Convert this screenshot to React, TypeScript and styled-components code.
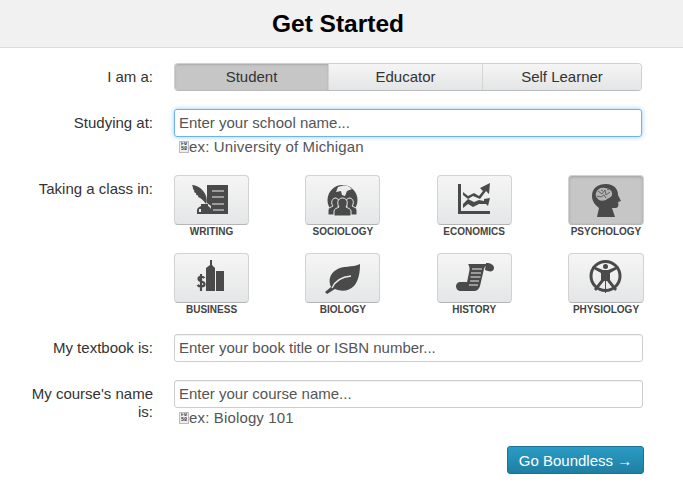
import React from 'react';
import styled, { createGlobalStyle } from 'styled-components';

const GlobalStyle = createGlobalStyle`
  html, body {
    margin: 0;
    padding: 0;
    background: #fff;
    font-family: "Liberation Sans", Arial, sans-serif;
  }
`;

const Page = styled.div`
  width: 683px;
  height: 492px;
  overflow: hidden;
  background: #fff;
`;

const Header = styled.h1`
  height: 47px;
  margin: 0 0 15px 0;
  padding-right: 7px;
  background: #f1f1f1;
  border-bottom: 1px solid #dcdcdc;
  color: #000;
  font-size: 24.5px;
  line-height: 47px;
  font-weight: bold;
  text-align: center;
`;

const Row = styled.div<{ $gap: number }>`
  display: grid;
  grid-template-columns: 123px 470px;
  column-gap: 21px;
  padding-left: 30px;
  margin-bottom: ${props => props.$gap}px;
`;

const Label = styled.div`
  color: #333;
  font-size: 15px;
  line-height: 18px;
  padding-top: 5px;
  text-align: right;
`;

const Segments = styled.div`
  display: grid;
  grid-template-columns: 153px 154px 1fr;
  width: 468px;
  height: 28px;
  box-sizing: border-box;
  border: 1px solid #cfcfcf;
  border-bottom-color: #bbb;
  border-radius: 4px;
  overflow: hidden;
`;

const Segment = styled.div<{ $active?: boolean }>`
  color: #333;
  font-size: 15px;
  line-height: 26px;
  text-align: center;
  border-left: 1px solid #d4d4d4;
  background: ${props => props.$active ? '#c6c6c6' : 'linear-gradient(#f5f5f5, #e4e5e6)'};
  box-shadow: ${props => props.$active ? 'inset 0 1px 2px rgba(0, 0, 0, 0.15)' : 'none'};

  &:first-child {
    border-left: 0;
  }
`;

const Field = styled.div<{ $focused?: boolean; $wide?: boolean }>`
  width: ${props => props.$wide ? 469 : 468}px;
  height: 28px;
  box-sizing: border-box;
  padding-left: 4px;
  background: #fff;
  border: 1px solid ${props => props.$focused ? '#6fb2ea' : '#cdcdcd'};
  border-radius: 3px;
  box-shadow: ${props => props.$focused
    ? '0 0 5px rgba(82, 168, 236, 0.6)'
    : 'inset 0 1px 1px rgba(0, 0, 0, 0.06)'};
  color: #555;
  font-size: 15px;
  line-height: 26px;
`;

const Hint = styled.div`
  display: flex;
  align-items: center;
  height: 16px;
  margin-top: 2px;
  padding-left: 5px;
  color: #555;
  font-size: 15px;
  line-height: 16px;
  letter-spacing: 0.15px;
`;

const MissingGlyph = styled.span`
  display: inline-block;
  flex: none;
  width: 10px;
  height: 12px;
  box-sizing: border-box;
  background: #eee;
  border: 1px solid #bbb;
  color: #333;
  font-family: "Liberation Mono", monospace;
  font-size: 5px;
  font-weight: bold;
  line-height: 5px;
  letter-spacing: 0;
  text-align: center;
  overflow: hidden;
`;

const SubjectGrid = styled.div`
  display: grid;
  grid-template-columns: 75px 75px 75px 76px;
  justify-content: space-between;
  row-gap: 14px;
  width: 470px;
`;

const SubjectButton = styled.div<{ $active?: boolean }>`
  height: 50px;
  box-sizing: border-box;
  border: 1px solid #d2d2d2;
  border-bottom-color: #b5b5b5;
  border-radius: 4px;
  background: ${props => props.$active ? '#c6c6c6' : 'linear-gradient(#f5f5f5, #e5e6e7)'};
  box-shadow: ${props => props.$active ? 'inset 0 1px 3px rgba(0, 0, 0, 0.2)' : 'none'};

  svg {
    display: block;
    margin: -1px;
  }
`;

const SubjectName = styled.div`
  color: #444;
  font-size: 10px;
  font-weight: bold;
  line-height: 14px;
  white-space: nowrap;
  display: flex;
  justify-content: center;
`;

const Actions = styled.div`
  display: flex;
  justify-content: flex-end;
  width: 644px;
  margin-top: 20px;
`;

const GoButton = styled.div`
  width: 137px;
  height: 28px;
  box-sizing: border-box;
  border: 1px solid #1c7292;
  border-radius: 3px;
  background: linear-gradient(#2b9cc4, #1f7fa3);
  color: #fff;
  font-size: 15px;
  line-height: 27px;
  text-align: center;
`;

const INK = '#4a4a4a';

const Icon: React.FC<{ children: React.ReactNode }> = ({ children }) => (
  <svg width="75" height="50" viewBox="0 0 75 50">{children}</svg>
);

const WritingIcon = () => (
  <Icon>
    <path fill={INK} d="M33 10h21v29H37v-8l-4-3z" />
    <path stroke="#ececec" strokeWidth="1.2" d="M38 16h12M38 22h12M38 29h12M39 35h11" />
    <path fill={INK} d="M18 10c6 0 12 5 14 11 1 3 1 6 0 8-2-3-5-6-8-7 1-1 0-2-2-2 1-1 0-2-2-3 1-1 0-2-1-3 0-1 0-2-1-4z" />
    <path fill={INK} d="M27 29h7v2c2 1 3 2 3 4v4H23v-4c0-2 2-3 4-4z" />
    <path fill="#ececec" d="M25 34h2v3h-2z" />
  </Icon>
);

const SociologyIcon = () => (
  <Icon>
    <circle cx="37.5" cy="25" r="15" fill={INK} />
    <path fill="#ececec" d="M33 12c3-1 7-2 10-1l4 3-5 2-2 5-3-1-1-4-5 1z" />
    <path fill={INK} stroke="#ececec" strokeWidth="1" d="M23 40v-5c0-2 3-3 5-4-2-2-2-7 2-8 3 0 5 3 4 6l-1 2 4 9zM52 40v-5c0-2-3-3-5-4 2-2 2-7-2-8-3 0-5 3-4 6l1 2-4 9z" />
    <path fill={INK} stroke="#ececec" strokeWidth="1" d="M29 41v-5c0-2 3-3 5-4-2-3-2-9 3.500-9s5.500 6 3.500 9c2 1 5 2 5 4v5z" />
  </Icon>
);

const EconomicsIcon = () => (
  <Icon>
    <path fill={INK} d="M21 9h3v27h29v3H21z" />
    <path fill={INK} d="M26 17l5 4 6-3 5 3 4-5-3-3 10-5-1 11-3-3-6 8-7-3-5 3-5-4z" />
    <path fill={INK} d="M26 29l5-5 6 3 5-2 5 1 0-2 6-1-2 8-2-2-7 0-6 3-5-3-5 4z" />
  </Icon>
);

const PsychologyIcon = () => (
  <Icon>
    <path fill={INK} d="M24 21c0-8 6-12 14-12 8 0 12 5 12 11l3 6-3 1c1 3 0 6-2 6h-4l3 9H29l2-9c-4-3-7-7-7-12z" />
    <path fill="#b4b4b4" d="M28 18c1-4 5-6 9-5 4 0 8 3 7 7-1 3-4 3-6 5-3 1-5 1-7 0-2-2-4-4-3-7z" />
    <path fill="none" stroke={INK} strokeWidth="0.8" d="M30 16l4 3 3-4 1 5 4-3M29 21l4 1 3-2 2 3M33 15l2 1M39 14l2 1" />
  </Icon>
);

const BusinessIcon = () => (
  <Icon>
    <path fill={INK} d="M32 38V15l4-3V7h2v5l3 3v23zM42 18h8v20h-8z" />
    <path fill="none" stroke={INK} strokeWidth="2.2" d="M30.500 25c-1-1.500-6-2-6 .8 0 3.500 6 2 6 5.500 0 3-5.500 2.500-7 .7M27 21v17" />
  </Icon>
);

const BiologyIcon = () => (
  <Icon>
    <path fill={INK} d="M55 11c0 8-1 16-6 22-5 5-12 6-19 3l-8 5-2-2 6-5c-3-7-1-13 5-17 7-5 16-2 24-6z" />
    <path fill="none" stroke="#ececec" strokeWidth="1.300" d="M27 35c3-7 9-11 19-12" />
  </Icon>
);

const HistoryIcon = () => (
  <Icon>
    <path fill={INK} d="M31 11h20c-2 1-3.500 3-4 5l-4 17c-1 3-3 5-6 5H24c3-1 5-3 5.500-6l3-15c.3-2-.5-5-1.500-6z" />
    <path fill={INK} d="M49 10c5 0 8 2 8 5s-3 4-6 3l-3-1z" />
    <path fill={INK} d="M23 29h8l-1 9H24c-3 0-5-2-5-5 0-2 2-4 4-4z" />
    <path stroke="#ececec" strokeWidth="1.200" d="M35 16h10M34 20h10M33.500 24h10M33 28h9M32 32h9" />
  </Icon>
);

const PhysiologyIcon = () => (
  <Icon>
    <circle cx="37.5" cy="23" r="14.500" fill="none" stroke={INK} strokeWidth="3" />
    <circle cx="37.5" cy="13.500" r="2.500" fill={INK} />
    <path fill={INK} d="M25 13l10 4h5l10-4 1 2-9 5v7l7 9-2 2-8-10-1 0v12h-1V28l-1 0-8 10-2-2 7-9v-7l-9-5z" />
  </Icon>
);

const subjects = [
  { name: 'Writing', icon: <WritingIcon /> },
  { name: 'Sociology', icon: <SociologyIcon /> },
  { name: 'Economics', icon: <EconomicsIcon /> },
  { name: 'Psychology', icon: <PsychologyIcon />, active: true },
  { name: 'Business', icon: <BusinessIcon /> },
  { name: 'Biology', icon: <BiologyIcon /> },
  { name: 'History', icon: <HistoryIcon /> },
  { name: 'Physiology', icon: <PhysiologyIcon /> },
];

const Tofu = () => (
  <MissingGlyph>F0<br />58</MissingGlyph>
);

export default function App() {
  return (
    <Page>
      <GlobalStyle />
      <Header>Get Started</Header>

      <Row $gap={18}>
        <Label>I am a:</Label>
        <Segments>
          <Segment $active>Student</Segment>
          <Segment>Educator</Segment>
          <Segment>Self Learner</Segment>
        </Segments>
      </Row>

      <Row $gap={20}>
        <Label>Studying at:</Label>
        <div>
          <Field $focused>Enter your school name...</Field>
          <Hint><Tofu />ex: University of Michigan</Hint>
        </div>
      </Row>

      <Row $gap={17}>
        <Label>Taking a class in:</Label>
        <SubjectGrid>
          {subjects.map(subject => (
            <div key={subject.name}>
              <SubjectButton $active={subject.active}>{subject.icon}</SubjectButton>
              <SubjectName>{subject.name.toUpperCase()}</SubjectName>
            </div>
          ))}
        </SubjectGrid>
      </Row>

      <Row $gap={18}>
        <Label>My textbook is:</Label>
        <Field $wide>Enter your book title or ISBN number...</Field>
      </Row>

      <Row $gap={0}>
        <Label>My course's name is:</Label>
        <div>
          <Field $wide>Enter your course name...</Field>
          <Hint><Tofu />ex: Biology 101</Hint>
        </div>
      </Row>

      <Actions>
        <GoButton>Go Boundless →</GoButton>
      </Actions>
    </Page>
  );
}
